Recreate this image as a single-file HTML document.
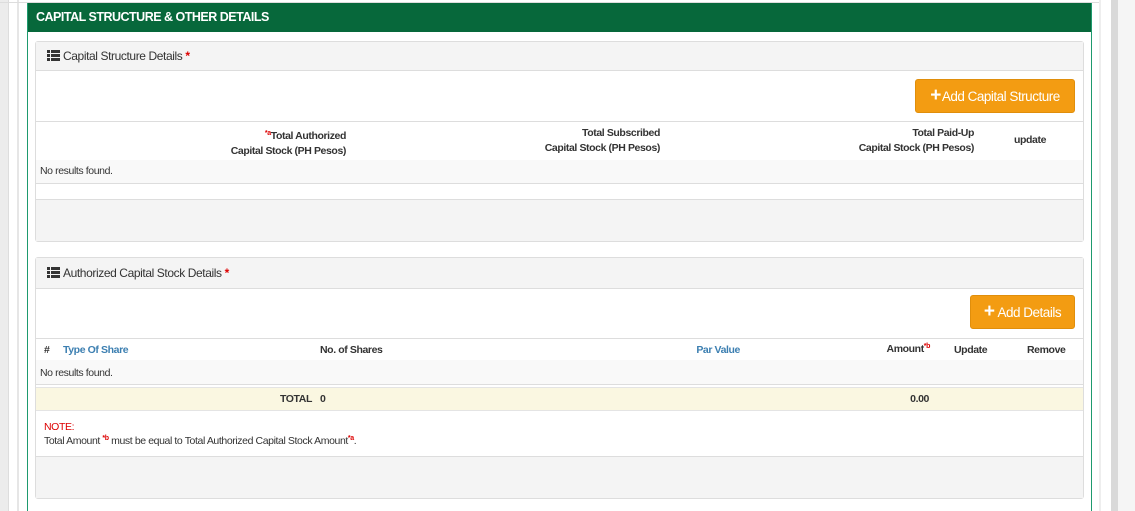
<!DOCTYPE html>
<html><head><meta charset="utf-8"><style>
*{box-sizing:border-box;margin:0;padding:0}
html,body{width:1135px;height:511px;overflow:hidden}
body{background:#fff;position:relative;font-family:"Liberation Sans",sans-serif;color:#333;font-size:10.5px;letter-spacing:-0.4px}
.a{position:absolute}
.b{font-weight:bold}
.r{text-align:right}
.red{color:#d00}
.blue{color:#3c7fb1}
sup{font-size:7px;color:#d00;vertical-align:4px;font-weight:bold}
.btn{position:absolute;background:#f39c12;border:1px solid #e08e0b;border-radius:3px;color:#fff;font-size:13.5px;display:flex;align-items:center;justify-content:center;letter-spacing:-0.5px}
.ico{display:inline-block;width:13px;height:11px;vertical-align:-1px;margin-right:3px}
</style></head><body>
<div class="a" style="left:0;top:0;width:8px;height:511px;background:#ececec"></div>
<div class="a" style="left:8px;top:0;width:1px;height:511px;background:#ddd"></div>
<div class="a" style="left:17px;top:0;width:2px;height:511px;background:#e6e6e6"></div>
<div class="a" style="left:0;top:2px;width:1100px;height:1px;background:#ddd"></div>
<div class="a" style="left:1099px;top:0;width:2px;height:511px;background:#eee"></div>
<div class="a" style="left:1111px;top:0;width:7px;height:511px;background:#d9d9d9"></div>
<div class="a" style="left:1118px;top:0;width:17px;height:511px;background:#f5f5f5"></div>

<div class="a" style="left:27px;top:3px;width:1065px;height:508px;border-left:1px solid #1e9a6e;border-right:1px solid #1e9a6e"></div>
<div class="a b" style="left:28px;top:3px;width:1063px;height:29px;background:#07683b;color:#fff;font-size:12.5px;padding:7px 0 0 8px;letter-spacing:-0.5px">CAPITAL STRUCTURE &amp; OTHER DETAILS</div>

<!-- Panel 1 -->
<div class="a" style="left:35px;top:41px;width:1049px;height:201px;border:1px solid #ddd;border-radius:3px;background:#fff"></div>
<div class="a" style="left:36px;top:42px;width:1047px;height:29px;background:#f4f4f4;border-bottom:1px solid #ddd"></div>
<div class="a" style="left:47px;top:49px;font-size:12px;color:#333"><svg class="ico" viewBox="0 0 13 11"><rect x="0" y="0" width="3" height="3" fill="#333"/><rect x="4" y="0" width="9" height="3" fill="#333"/><rect x="0" y="4" width="3" height="3" fill="#333"/><rect x="4" y="4" width="9" height="3" fill="#333"/><rect x="0" y="8" width="3" height="3" fill="#333"/><rect x="4" y="8" width="9" height="3" fill="#333"/></svg>Capital Structure Details <span class="red b">*</span></div>
<div class="btn" style="left:915px;top:79px;width:160px;height:34px"><b style="font-size:19px;margin-right:1px">+</b>Add Capital Structure</div>
<div class="a" style="left:36px;top:121px;width:1047px;height:1px;background:#ddd"></div>
<div class="a b r" style="left:100px;top:126px;width:246px;line-height:15px"><sup>*a</sup>Total Authorized<br>Capital Stock (PH Pesos)</div>
<div class="a b r" style="left:400px;top:126px;width:260px;line-height:15px">Total Subscribed<br>Capital Stock (PH Pesos)</div>
<div class="a b r" style="left:700px;top:126px;width:274px;line-height:15px">Total Paid-Up<br>Capital Stock (PH Pesos)</div>
<div class="a b" style="left:1014px;top:134px">update</div>
<div class="a" style="left:36px;top:160px;width:1047px;height:24px;background:#f9f9f9;border-bottom:1px solid #ddd;padding:5px 0 0 4px">No results found.</div>
<div class="a" style="left:36px;top:199px;width:1047px;height:42px;background:#f4f4f4;border-top:1px solid #ddd"></div>

<!-- Panel 2 -->
<div class="a" style="left:35px;top:257px;width:1049px;height:242px;border:1px solid #ddd;border-radius:3px;background:#fff"></div>
<div class="a" style="left:36px;top:258px;width:1047px;height:31px;background:#f4f4f4;border-bottom:1px solid #ddd"></div>
<div class="a" style="left:47px;top:266px;font-size:12px"><svg class="ico" viewBox="0 0 13 11"><rect x="0" y="0" width="3" height="3" fill="#333"/><rect x="4" y="0" width="9" height="3" fill="#333"/><rect x="0" y="4" width="3" height="3" fill="#333"/><rect x="4" y="4" width="9" height="3" fill="#333"/><rect x="0" y="8" width="3" height="3" fill="#333"/><rect x="4" y="8" width="9" height="3" fill="#333"/></svg>Authorized Capital Stock Details <span class="red b">*</span></div>
<div class="btn" style="left:970px;top:295px;width:105px;height:34px"><b style="font-size:19px;margin-right:3px">+</b>Add Details</div>
<div class="a" style="left:36px;top:338px;width:1047px;height:1px;background:#ddd"></div>
<div class="a b" style="left:44px;top:344px">#</div>
<div class="a b blue" style="left:63px;top:344px">Type Of Share</div>
<div class="a b" style="left:320px;top:344px">No. of Shares</div>
<div class="a b blue r" style="left:600px;top:344px;width:140px">Par Value</div>
<div class="a b r" style="left:800px;top:343px;width:130px">Amount<sup>*b</sup></div>
<div class="a b" style="left:954px;top:344px">Update</div>
<div class="a b" style="left:1027px;top:344px">Remove</div>
<div class="a" style="left:36px;top:360px;width:1047px;height:25px;background:#f9f9f9;border-bottom:1px solid #ddd;padding:7px 0 0 4px">No results found.</div>
<div class="a" style="left:36px;top:387px;width:1047px;height:24px;background:#faf7e1;border-top:1px solid #e4e4e4;border-bottom:1px solid #e4e4e4"></div>
<div class="a b r" style="left:200px;top:393px;width:112px">TOTAL</div>
<div class="a b" style="left:320px;top:393px">0</div>
<div class="a b r" style="left:800px;top:393px;width:129px">0.00</div>
<div class="a red" style="left:44px;top:421px">NOTE:</div>
<div class="a" style="left:44px;top:435px">Total Amount <sup>*b</sup> must be equal to Total Authorized Capital Stock Amount<sup>*a</sup>.</div>
<div class="a" style="left:36px;top:456px;width:1047px;height:42px;background:#f4f4f4;border-top:1px solid #ddd"></div>
</body></html>
